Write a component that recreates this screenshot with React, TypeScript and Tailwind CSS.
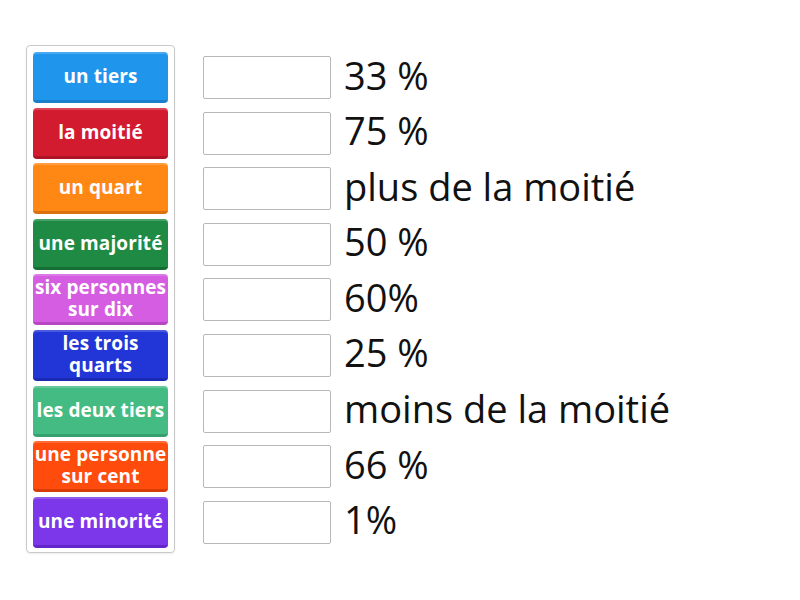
import React from 'react'

const tiles = [
    { label: 'un tiers', bg: 'bg-[#1f96ec]', edge: 'border-[#1a7fcb]' },
    { label: 'la moitié', bg: 'bg-[#d21b2f]', edge: 'border-[#ad1426]' },
    { label: 'un quart', bg: 'bg-[#ff8815]', edge: 'border-[#db7010]' },
    { label: 'une majorité', bg: 'bg-[#1e8a44]', edge: 'border-[#166e35]' },
    { label: 'six personnes sur dix', bg: 'bg-[#d45de1]', edge: 'border-[#b646c2]' },
    { label: 'les trois quarts', bg: 'bg-[#2236d7]', edge: 'border-[#1a2ab2]' },
    { label: 'les deux tiers', bg: 'bg-[#45bb84]', edge: 'border-[#36a06f]' },
    { label: 'une personne sur cent', bg: 'bg-[#ff4b0b]', edge: 'border-[#d83c06]' },
    { label: 'une minorité', bg: 'bg-[#7b37e9]', edge: 'border-[#6326c9]' },
]

const answers = ['33 %', '75 %', 'plus de la moitié', '50 %', '60%', '25 %', 'moins de la moitié', '66 %', '1%']

const App = () => {
    return (
        <div className="w-[800px] h-[600px] bg-white flex items-start pl-[26px] pt-[45px] gap-[28px]" style={{ fontFamily: '"Open Sans", sans-serif' }}>
            <div className="border border-[#c9c9c9] rounded-[4px] p-[6px] pb-[4px] flex flex-col gap-[4.6px] shadow-[0_1px_2px_rgba(0,0,0,0.08)]">
                {tiles.map((t) => (
                    <div
                        key={t.label}
                        className={`${t.bg} ${t.edge} w-[135px] h-[51px] rounded-[4px] border-b-[3px] flex items-center justify-center text-center px-0 text-white text-[19px] font-bold leading-[22px] tracking-[0.1px] shadow-[inset_0_2px_0_rgba(255,255,255,0.18)]`}
                    >
                        {t.label}
                    </div>
                ))}
            </div>

            <div className="pt-[7px] flex flex-col gap-[4.6px]">
                {answers.map((a) => (
                    <div key={a} className="h-[51px] flex items-center gap-[13px]">
                        <div className="w-[128px] h-[43px] border border-[#b8b8b8] rounded-[2px] bg-white" />
                        <span className="text-[38px] text-[#111] leading-none -mt-[6px]">{a}</span>
                    </div>
                ))}
            </div>
        </div>
    )
}

export default App
